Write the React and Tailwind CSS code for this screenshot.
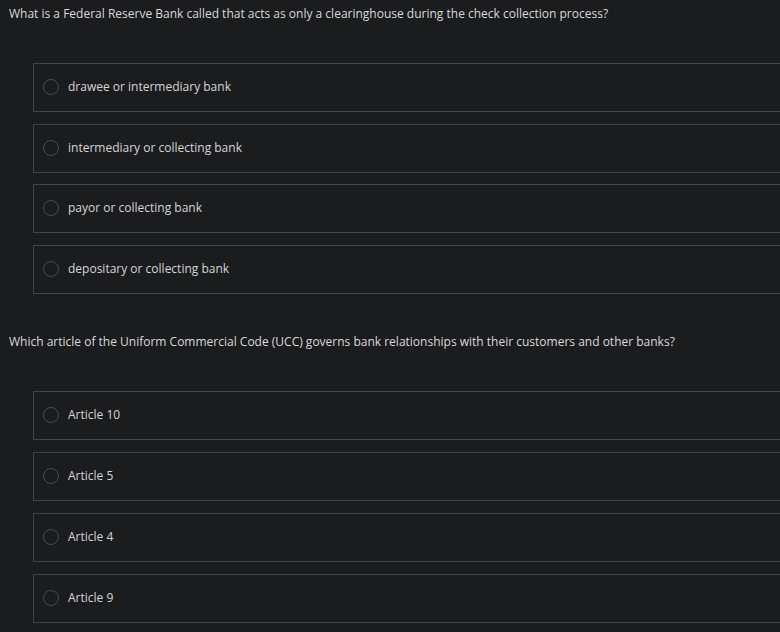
const questions = [
  {
    text: 'What is a Federal Reserve Bank called that acts as only a clearinghouse during the check collection process?',
    options: [
      'drawee or intermediary bank',
      'intermediary or collecting bank',
      'payor or collecting bank',
      'depositary or collecting bank',
    ],
  },
  {
    text: 'Which article of the Uniform Commercial Code (UCC) governs bank relationships with their customers and other banks?',
    options: ['Article 10', 'Article 5', 'Article 4', 'Article 9'],
  },
];

function Option({ label }) {
  return (
    <label className="flex items-center h-[49px] w-[800px] border border-[#444548] pl-[9px] pb-[1px] cursor-pointer">
      <span className="w-[16px] h-[16px] rounded-full border border-[#4a4b4e] shrink-0" />
      <span className="ml-[9px] text-[12px] text-[#d6d6d6]">{label}</span>
    </label>
  );
}

export default function App() {
  return (
    <div
      className="w-[780px] h-[632px] overflow-hidden bg-[#1b1c1e] pt-[5px] pl-[9px]"
      style={{ fontFamily: '"Open Sans", "Noto Sans", sans-serif' }}
    >
      {questions.map((q, i) => (
        <div key={i} className={i > 0 ? 'mt-[39px]' : ''}>
          <p className="text-[12px] leading-[18px] text-[#dadada]">{q.text}</p>
          <div className={`flex flex-col ml-[24px] ${i > 0 ? 'mt-[40px] gap-[12px]' : 'mt-[40px] gap-[11.67px]'}`}>
            {q.options.map((o) => (
              <Option key={o} label={o} />
            ))}
          </div>
        </div>
      ))}
    </div>
  );
}
